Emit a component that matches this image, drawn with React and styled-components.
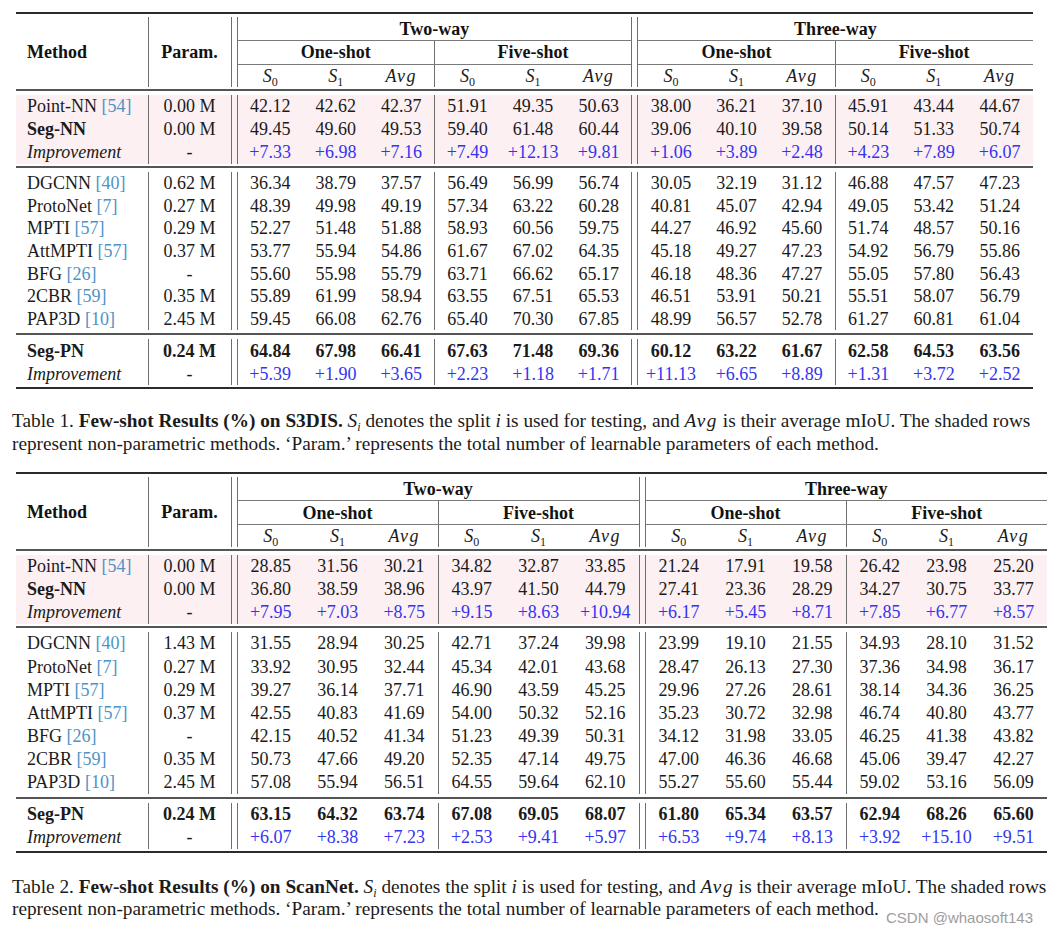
import React from "react";
import styled, { createGlobalStyle } from "styled-components";

const GlobalStyle = createGlobalStyle`
  html, body {
    margin: 0;
    padding: 0;
    background: #ffffff;
  }
  body {
    font-family: "Liberation Serif", "Times New Roman", serif;
    color: #1b1b1b;
  }
`;

const Page = styled.div`
  position: relative;
  width: 1049px;
  height: 934px;
  box-sizing: border-box;
  padding: 11px 0 0 12px;
  overflow: hidden;
`;

const Grid = styled.table`
  border-collapse: collapse;
  table-layout: fixed;
  width: ${p => p.$width}px;
  margin-left: 4px;
  font-size: 18px;
  line-height: 20px;
`;

const Col = styled.col`
  width: ${p => p.$w}px;
`;

const Cell = styled.td`
  padding: 0 0 0 ${p => (p.$first ? 11 : 0)}px;
  height: ${p => p.$h || 23}px;
  text-align: ${p => (p.$first ? "left" : "center")};
  vertical-align: middle;
  white-space: nowrap;
  border-left: ${p => (p.$line ? "1px solid #6e6e6e" : "0")};
  background: ${p => (p.$shade ? "#fcf0f3" : "transparent")};
  font-weight: ${p => (p.$bold ? 700 : 400)};
  font-style: ${p => (p.$italic ? "italic" : "normal")};
  color: ${p => (p.$gain ? "#3434f0" : "#1b1b1b")};
`;

const HeadCell = styled.th`
  padding: 0 0 0 ${p => (p.$first ? 11 : 0)}px;
  height: ${p => p.$h || 22.5}px;
  text-align: ${p => (p.$first ? "left" : "center")};
  vertical-align: middle;
  white-space: nowrap;
  font-weight: 700;
  color: #121212;
  border-left: ${p => (p.$line ? "1px solid #6e6e6e" : "0")};
  border-bottom: ${p => (p.$under ? "1px solid #7a7a7a" : "0")};
`;

const Gap = styled.td`
  padding: 0;
  border-left: 1px solid #6e6e6e;
  border-right: 1px solid #6e6e6e;
  background: ${p => (p.$shade ? "#fcf0f3" : "transparent")};
`;

const RuleCell = styled.td`
  padding: ${p => p.$above}px 0 ${p => p.$below}px;
`;

const RuleLine = styled.div`
  height: ${p => p.$weight}px;
  background: ${p => p.$color};
`;

const MathVar = styled.span`
  font-style: italic;
  letter-spacing: ${p => (p.$spaced ? "1.5px" : "0")};
`;

const Sub = styled.sub`
  font-size: 12px;
  font-style: ${p => (p.$italic ? "italic" : "normal")};
  vertical-align: -4px;
  line-height: 0;
`;

const Cite = styled.span`
  color: #4f93c4;
`;

const Caption = styled.p`
  margin: ${p => p.$top}px 0 ${p => p.$bottom}px;
  font-size: 19.3px;
  line-height: 22.5px;
  white-space: nowrap;
  color: #1b1b1b;
`;

const Watermark = styled.div`
  position: absolute;
  right: 16px;
  top: 909px;
  font-family: "Liberation Sans", Arial, sans-serif;
  font-size: 15px;
  color: #9d9d9d;
`;

const S0 = () => (
  <MathVar>
    S<Sub>0</Sub>
  </MathVar>
);
const S1 = () => (
  <MathVar>
    S<Sub>1</Sub>
  </MathVar>
);
const Avg = () => <MathVar $spaced>Avg</MathVar>;

const r = (name, cite, param, vals, kind = "plain") => ({
  name,
  cite,
  param,
  vals: vals.split(" "),
  kind
});

const s3dis = [
  r("Point-NN", "54", "0.00 M", "42.12 42.62 42.37 51.91 49.35 50.63 38.00 36.21 37.10 45.91 43.44 44.67"),
  r("Seg-NN", null, "0.00 M", "49.45 49.60 49.53 59.40 61.48 60.44 39.06 40.10 39.58 50.14 51.33 50.74", "nn"),
  r("Improvement", null, "-", "+7.33 +6.98 +7.16 +7.49 +12.13 +9.81 +1.06 +3.89 +2.48 +4.23 +7.89 +6.07", "gain"),
  r("DGCNN", "40", "0.62 M", "36.34 38.79 37.57 56.49 56.99 56.74 30.05 32.19 31.12 46.88 47.57 47.23"),
  r("ProtoNet", "7", "0.27 M", "48.39 49.98 49.19 57.34 63.22 60.28 40.81 45.07 42.94 49.05 53.42 51.24"),
  r("MPTI", "57", "0.29 M", "52.27 51.48 51.88 58.93 60.56 59.75 44.27 46.92 45.60 51.74 48.57 50.16"),
  r("AttMPTI", "57", "0.37 M", "53.77 55.94 54.86 61.67 67.02 64.35 45.18 49.27 47.23 54.92 56.79 55.86"),
  r("BFG", "26", "-", "55.60 55.98 55.79 63.71 66.62 65.17 46.18 48.36 47.27 55.05 57.80 56.43"),
  r("2CBR", "59", "0.35 M", "55.89 61.99 58.94 63.55 67.51 65.53 46.51 53.91 50.21 55.51 58.07 56.79"),
  r("PAP3D", "10", "2.45 M", "59.45 66.08 62.76 65.40 70.30 67.85 48.99 56.57 52.78 61.27 60.81 61.04"),
  r("Seg-PN", null, "0.24 M", "64.84 67.98 66.41 67.63 71.48 69.36 60.12 63.22 61.67 62.58 64.53 63.56", "pn"),
  r("Improvement", null, "-", "+5.39 +1.90 +3.65 +2.23 +1.18 +1.71 +11.13 +6.65 +8.89 +1.31 +3.72 +2.52", "gain")
];

const scannet = [
  r("Point-NN", "54", "0.00 M", "28.85 31.56 30.21 34.82 32.87 33.85 21.24 17.91 19.58 26.42 23.98 25.20"),
  r("Seg-NN", null, "0.00 M", "36.80 38.59 38.96 43.97 41.50 44.79 27.41 23.36 28.29 34.27 30.75 33.77", "nn"),
  r("Improvement", null, "-", "+7.95 +7.03 +8.75 +9.15 +8.63 +10.94 +6.17 +5.45 +8.71 +7.85 +6.77 +8.57", "gain"),
  r("DGCNN", "40", "1.43 M", "31.55 28.94 30.25 42.71 37.24 39.98 23.99 19.10 21.55 34.93 28.10 31.52"),
  r("ProtoNet", "7", "0.27 M", "33.92 30.95 32.44 45.34 42.01 43.68 28.47 26.13 27.30 37.36 34.98 36.17"),
  r("MPTI", "57", "0.29 M", "39.27 36.14 37.71 46.90 43.59 45.25 29.96 27.26 28.61 38.14 34.36 36.25"),
  r("AttMPTI", "57", "0.37 M", "42.55 40.83 41.69 54.00 50.32 52.16 35.23 30.72 32.98 46.74 40.80 43.77"),
  r("BFG", "26", "-", "42.15 40.52 41.34 51.23 49.39 50.31 34.12 31.98 33.05 46.25 41.38 43.82"),
  r("2CBR", "59", "0.35 M", "50.73 47.66 49.20 52.35 47.14 49.75 47.00 46.36 46.68 45.06 39.47 42.27"),
  r("PAP3D", "10", "2.45 M", "57.08 55.94 56.51 64.55 59.64 62.10 55.27 55.60 55.44 59.02 53.16 56.09"),
  r("Seg-PN", null, "0.24 M", "63.15 64.32 63.74 67.08 69.05 68.07 61.80 65.34 63.57 62.94 68.26 65.60", "pn"),
  r("Improvement", null, "-", "+6.07 +8.38 +7.23 +2.53 +9.41 +5.97 +6.53 +9.74 +8.13 +3.92 +15.10 +9.51", "gain")
];

const COLS = 16;

const Rule = ({ above, below, weight, color }) => (
  <tr>
    <RuleCell colSpan={COLS} $above={above} $below={below}>
      <RuleLine $weight={weight} $color={color} />
    </RuleCell>
  </tr>
);

const DataRow = ({ row, shade, h }) => {
  const bold = row.kind === "pn";
  const gain = row.kind === "gain";
  const cells = (vals, key) =>
    vals.map((v, i) => (
      <Cell key={key + i} $h={h} $line={i === 3} $shade={shade} $bold={bold} $gain={gain}>
        {v}
      </Cell>
    ));
  return (
    <tr>
      <Cell $first $h={h} $shade={shade} $bold={bold || row.kind === "nn"} $italic={gain}>
        {row.name}
        {row.cite && (
          <>
            {" "}
            <Cite>[{row.cite}]</Cite>
          </>
        )}
      </Cell>
      <Cell $h={h} $line $shade={shade} $bold={bold}>
        {row.param}
      </Cell>
      <Gap $shade={shade} />
      {cells(row.vals.slice(0, 6), "a")}
      <Gap $shade={shade} />
      {cells(row.vals.slice(6), "b")}
    </tr>
  );
};

const SymbolCells = ({ prefix }) =>
  [0, 1].map(g => (
    <React.Fragment key={prefix + g}>
      <Cell $h={22} $line={g === 1}>
        <S0 />
      </Cell>
      <Cell $h={22}>
        <S1 />
      </Cell>
      <Cell $h={22}>
        <Avg />
      </Cell>
    </React.Fragment>
  ));

const ResultTable = ({ rows, dataW, rowH }) => {
  const widths = [132, 83, 6, ...Array(6).fill(dataW), 6, ...Array(6).fill(dataW)];
  const width = widths.reduce((a, b) => a + b, 0);
  return (
    <Grid $width={width}>
      <colgroup>
        {widths.map((w, i) => (
          <Col key={i} $w={w} />
        ))}
      </colgroup>
      <tbody>
        <Rule above={1} below={3} weight={2} color="#2b2b2b" />
        <tr>
          <HeadCell rowSpan={3} $first>
            Method
          </HeadCell>
          <HeadCell rowSpan={3} $line>
            Param.
          </HeadCell>
          <Gap rowSpan={3} />
          <HeadCell colSpan={6} $under $h={23}>
            Two-way
          </HeadCell>
          <Gap rowSpan={3} />
          <HeadCell colSpan={6} $under $h={23}>
            Three-way
          </HeadCell>
        </tr>
        <tr>
          <HeadCell colSpan={3} $under>
            One-shot
          </HeadCell>
          <HeadCell colSpan={3} $under $line>
            Five-shot
          </HeadCell>
          <HeadCell colSpan={3} $under>
            One-shot
          </HeadCell>
          <HeadCell colSpan={3} $under $line>
            Five-shot
          </HeadCell>
        </tr>
        <tr>
          <SymbolCells prefix="two" />
          <SymbolCells prefix="three" />
        </tr>
        <Rule above={2} below={4} weight={2} color="#555" />
        {rows.slice(0, 3).map((row, i) => (
          <DataRow key={"p" + i} row={row} shade h={23} />
        ))}
        <Rule above={2} below={4} weight={2} color="#555" />
        {rows.slice(3, 10).map((row, i) => (
          <DataRow key={"m" + i} row={row} h={rowH} />
        ))}
        <Rule above={3} below={4} weight={2} color="#555" />
        {rows.slice(10).map((row, i) => (
          <DataRow key={"s" + i} row={row} h={23} />
        ))}
        <Rule above={2} below={0} weight={2} color="#2b2b2b" />
      </tbody>
    </Grid>
  );
};

const CaptionText = ({ n, dataset }) => (
  <>
    Table {n}. <b>Few-shot Results (%) on {dataset}.</b>{" "}
    <MathVar>
      S<Sub $italic>i</Sub>
    </MathVar>{" "}
    denotes the split <MathVar>i</MathVar> is used for testing, and <Avg /> is their average mIoU. The
    shaded rows
    <br />
    represent non-parametric methods. ‘Param.’ represents the total number of learnable parameters of
    each method.
  </>
);

export default function App() {
  return (
    <Page>
      <GlobalStyle />
      <ResultTable rows={s3dis} dataW={65.8} rowH={22.7} />
      <Caption $top={21} $bottom={16}>
        <CaptionText n={1} dataset="S3DIS" />
      </Caption>
      <ResultTable rows={scannet} dataW={67} rowH={23.15} />
      <Caption $top={23} $bottom={0}>
        <CaptionText n={2} dataset="ScanNet" />
      </Caption>
      <Watermark>CSDN @whaosoft143</Watermark>
    </Page>
  );
}
